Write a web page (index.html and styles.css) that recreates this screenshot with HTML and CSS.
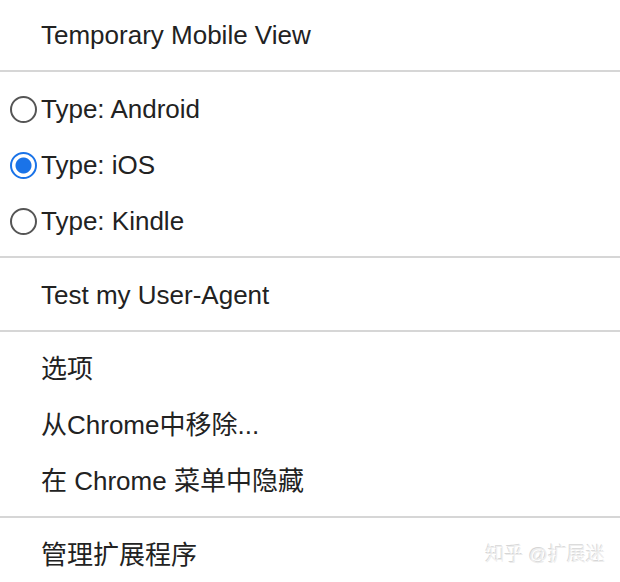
FILE: index.html
```html
<!DOCTYPE html>
<html lang="zh">
<head>
    <title>Extension Menu</title>
    <link rel="stylesheet" href="styles.css">
</head>
<body>
<ul class="menu">
    <li class="item">Temporary Mobile View</li>
    <li class="sep"></li>
    <!-- UA 类型单选 -->
    <li class="item radio_item"><span class="radio"></span>Type: Android</li>
    <li class="item radio_item"><span class="radio checked"></span>Type: iOS</li>
    <li class="item radio_item"><span class="radio"></span>Type: Kindle</li>
    <li class="sep"></li>
    <li class="item">Test my User-Agent</li>
    <li class="sep"></li>
    <li class="item cn">选项</li>
    <li class="item cn">从Chrome中移除...</li>
    <li class="item cn">在 Chrome 菜单中隐藏</li>
    <li class="sep"></li>
    <li class="item cn">管理扩展程序</li>
</ul>
<div class="watermark">知乎 @扩展迷</div>
</body>
</html>
```

FILE: styles.css
```css
* {
    box-sizing: border-box;
}

body {
    margin: 0;
    background-color: #fff;
    font-family: "Liberation Sans", "Noto Sans CJK SC", sans-serif;
    color: #222;
}

.menu {
    list-style-type: none;
    margin: 0;
    padding: 7px 0 0 0;
}

.item {
    height: 56px;
    display: flex;
    align-items: center;
    padding-left: 41px;
    font-size: 26px;
    line-height: 30px;
    white-space: nowrap;
}

/* 中文行的字形偏下，往上提一点 */
.item.cn {
    padding-bottom: 1px;
}

.radio_item {
    padding-left: 10px;
}

.radio {
    width: 27px;
    height: 27px;
    margin-right: 4px;
    border: 2.5px solid #555;
    border-radius: 50%;
    flex-shrink: 0;
}

.radio.checked {
    border-color: #1a73e8;
    background: radial-gradient(circle, #1a73e8 0 7.5px, #fff 8.5px);
}

.sep {
    height: 2px;
    margin: 7px 0 9px 0;
    background-color: #d6d6d6;
}

.watermark {
    position: absolute;
    right: 15px;
    bottom: 16px;
    font-size: 19px;
    font-weight: 300;
    color: #ececec;
    text-shadow: 1px 1px 0 #fff, -1px -1px 0 #d6d6d6;
}
```
